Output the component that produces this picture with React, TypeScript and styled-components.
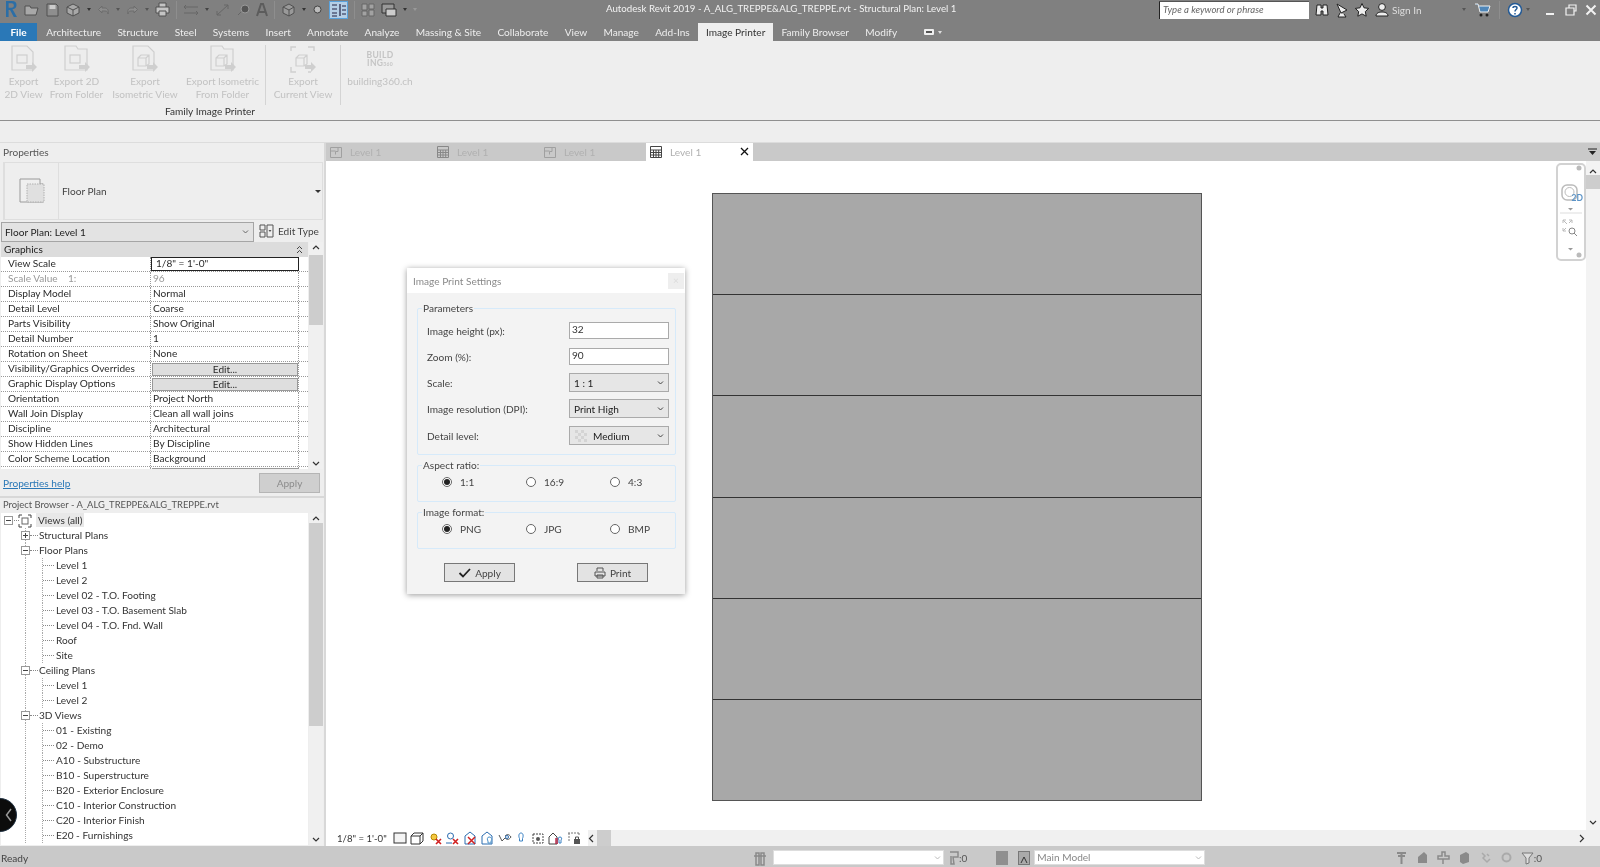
import React from 'react'
import styled, { createGlobalStyle } from 'styled-components'

const Global = createGlobalStyle`
  html, body { margin: 0; padding: 0; background: #eee; }
  * { box-sizing: border-box; }
  body { font-family: Lato, "Open Sans", sans-serif; font-size: 10.1px; color: #2a2a2a; }
`

const Page = styled.div`
  position: relative;
  width: 1600px;
  height: 867px;
  overflow: hidden;
  display: flex;
  flex-direction: column;
  background: #eee;
  filter: blur(0.3px);
`

/* ---------- title bar ---------- */
const TitleBar = styled.div`
  height: 22px;
  padding-bottom: 3px;
  background: #808080;
  display: flex;
  align-items: center;
  color: #eee;
`
const Qat = styled.div`
  width: 606px;
  display: flex;
  align-items: center;
  padding-left: 4px;
  gap: 6px;
  svg { display: block; flex: none; }
`
const QatSep = styled.span`
  width: 1px;
  height: 18px;
  background: #8e8e8e;
  flex: none;
`
const Caret = styled.span`
  width: 0;
  height: 0;
  border-left: 2.5px solid transparent;
  border-right: 2.5px solid transparent;
  border-top: 3px solid ${p => p.color || '#333'};
  flex: none;
`
const WindowTitle = styled.div`
  width: 553px;
  margin-top: -4px;
  font-size: 9.7px;
  white-space: nowrap;
  color: #f2f2f2;
`
const SearchBox = styled.div`
  width: 150px;
  height: 18px;
  background: #fff;
  border-left: 1px solid #222;
  border-top: 1px solid #555;
  color: #666;
  font-style: italic;
  font-size: 9.6px;
  line-height: 16px;
  padding-left: 3px;
`
const TitleTools = styled.div`
  flex: 1;
  display: flex;
  align-items: center;
  padding-left: 5px;
  svg { display: block; flex: none; }
`
const ToolGap = styled.span<{ $w: number }>`
  width: ${p => p.$w}px;
  flex: none;
`
const SignIn = styled.span`
  width: 72px;
  padding-left: 2px;
  color: #ddd;
`
const WinBtns = styled.div`
  margin-left: auto;
  padding-right: 3px;
  display: flex;
  gap: 7px;
  align-items: center;
`

/* ---------- ribbon tabs ---------- */
const TabBar = styled.div`
  height: 19px;
  background: #808080;
  display: flex;
  align-items: flex-end;
`
const FileTab = styled.div`
  width: 37px;
  height: 18px;
  background: #2a78b7;
  color: #fff;
  font-weight: 700;
  text-align: center;
  line-height: 18px;
  margin-right: 1px;
`
const RibbonTab = styled.div<{ $active?: boolean }>`
  height: 18px;
  line-height: 19px;
  padding: 0 8.15px;
  white-space: nowrap;
  color: ${p => (p.$active ? '#333' : '#ededed')};
  background: ${p => (p.$active ? '#eeeeee' : 'transparent')};
`
const TabExtra = styled.div`
  margin-left: 18px;
  display: flex;
  align-items: center;
  gap: 3px;
  height: 18px;
`

/* ---------- ribbon ---------- */
const Ribbon = styled.div`
  height: 80px;
  background: #eee;
  border-bottom: 1px solid #8f8f8f;
  flex: none;
  position: relative;
`
const RibbonRow = styled.div`
  height: 59px;
  padding-top: 4px;
  display: flex;
  align-items: flex-start;
`
const RibbonBtn = styled.div<{ $w: number }>`
  width: ${p => p.$w}px;
  display: flex;
  flex-direction: column;
  align-items: center;
  text-align: center;
  color: #c2c2c2;
  line-height: 12.5px;
  white-space: pre;
  flex: none;
  svg { display: block; }
`
const RibbonSep = styled.span<{ $gap?: number }>`
  width: 1px;
  height: 60px;
  margin-left: ${p => p.$gap ?? 0}px;
  background: #d4d4d4;
  flex: none;
`
const PanelLabel = styled.div`
  width: 420px;
  text-align: center;
  color: #333;
  padding-top: 5px;
`
const RibbonGap = styled.div`
  height: 22px;
  background: #eee;
  border-bottom: 1px solid #dcdcdc;
  flex: none;
`

/* ---------- main area ---------- */
const Main = styled.div`
  flex: 1;
  min-height: 0;
  display: flex;
`
const LeftColumn = styled.div`
  width: 326px;
  flex: none;
  display: flex;
  flex-direction: column;
  border-right: 2px solid #d8d8d8;
`
const PanelTitle = styled.div<{ $h: number; $size?: number }>`
  height: ${p => p.$h}px;
  line-height: ${p => p.$h - 1}px;
  padding-left: 3px;
  color: #555;
  font-size: ${p => p.$size ?? 10.1}px;
  white-space: nowrap;
`
const TypeSelector = styled.div`
  margin: 0 1px 0 3px;
  height: 58px;
  border: 1px solid #dedede;
  display: flex;
  align-items: center;
`
const TypeThumb = styled.div`
  width: 55px;
  height: 56px;
  border-right: 1px solid #dedede;
  border-left: 1px solid #dedede;
  display: flex;
  align-items: center;
  justify-content: center;
  margin-right: 3px;
`
const TypeName = styled.div`
  flex: 1;
  color: #444;
`
const BlackCaret = styled.span`
  margin-right: 1px;
  border-left: 3.5px solid transparent;
  border-right: 3.5px solid transparent;
  border-top: 3.5px solid #333;
`
const InstanceRow = styled.div`
  height: 20px;
  margin-top: 2px;
  display: flex;
  align-items: center;
`
const InstanceSelect = styled.div`
  width: 253px;
  height: 20px;
  margin-left: 1px;
  background: #e3e3e3;
  border: 1px solid #a5a5a5;
  padding: 0 4px 1px 3px;
  display: flex;
  align-items: center;
  justify-content: space-between;
  color: #222;
`
const EditType = styled.div`
  display: flex;
  align-items: center;
  gap: 4px;
  margin-left: 5px;
  margin-top: -2px;
  color: #444;
`
const PropsBody = styled.div`
  height: 227px;
  display: flex;
`
const PropsTable = styled.div`
  width: 307px;
  margin-left: 1px;
  overflow: hidden;
  background: #fff;
`
const GroupHead = styled.div`
  height: 15px;
  background: #dcdcdc;
  line-height: 14px;
  padding: 0 5px 1px 3px;
  display: flex;
  align-items: center;
  justify-content: space-between;
  color: #222;
`
const PropRow = styled.div`
  display: grid;
  grid-template-columns: 150px 148px 9px;
  height: 15px;
  line-height: 13px;
  border-bottom: 1px dotted #999;
`
const PropName = styled.div<{ $dim?: boolean }>`
  padding-left: 7px;
  color: ${p => (p.$dim ? '#999' : '#2a2a2a')};
  white-space: pre;
  border-right: 1px dotted #999;
`
const PropValue = styled.div<{ $dim?: boolean; $focus?: boolean }>`
  padding-left: ${p => (p.$focus ? '4px' : '2px')};
  color: ${p => (p.$dim ? '#999' : '#2a2a2a')};
  border: ${p => (p.$focus ? '1px solid #222' : '0')};
  border-right: ${p => (p.$focus ? '1px solid #222' : '1px dotted #999')};
  line-height: ${p => (p.$focus ? '11px' : '13px')};
  white-space: nowrap;
`
const EditBtn = styled.div`
  margin: 1px 0 0 -1px;
  height: 13px;
  line-height: 11px;
  background: #dedede;
  border: 1px solid #999;
  text-align: center;
`
const ScrollTrack = styled.div`
  width: 14px;
  margin-left: 1px;
  background: #f0f0f0;
  display: flex;
  flex-direction: column;
  align-items: center;
  padding-top: 3px;
  svg { display: block; flex: none; }
`
const ScrollThumb = styled.div<{ $h: number; $top?: number }>`
  width: 14px;
  height: ${p => p.$h}px;
  margin-top: ${p => p.$top ?? 5}px;
  background: #cdcdcd;
  flex: none;
`
const ScrollEnd = styled.div`
  margin-top: auto;
  margin-bottom: 3px;
`
const HelpRow = styled.div`
  height: 27px;
  display: flex;
  align-items: center;
  justify-content: space-between;
  padding: 0 4px 0 3px;
`
const HelpLink = styled.a`
  color: #2a78b7;
  text-decoration: underline;
`
const ApplyDisabled = styled.div`
  width: 61px;
  height: 20px;
  background: #cfcfcf;
  border: 1px solid #b5b5b5;
  text-align: center;
  line-height: 18px;
  color: #8c8c8c;
`
const PanelDivider = styled.div`
  height: 2px;
  background: #d8d8d8;
`
const BrowserBody = styled.div`
  flex: 1;
  min-height: 0;
  display: flex;
  padding-bottom: 1px;
`
const TreeList = styled.div`
  width: 307px;
  margin-left: 1px;
  overflow: hidden;
  background: #fff;
`
const TreeRow = styled.div<{ $level: number }>`
  position: relative;
  height: 15px;
  line-height: 15px;
  white-space: nowrap;
  padding-left: ${p => [35, 38, 55][p.$level]}px;
  color: #333;
  background: ${p =>
    p.$level === 2 ? 'linear-gradient(#aaa 50%, transparent 50%) 24px 0 / 1px 2px repeat-y' : 'none'};
  &::before {
    content: '';
    position: absolute;
    top: 7px;
    left: ${p => [11, 29, 42][p.$level]}px;
    width: ${p => [7, 8, 11][p.$level]}px;
    border-top: 1px dotted #888;
  }
  &::after {
    content: '';
    position: absolute;
    top: 0;
    left: ${p => [24, 24, 41][p.$level]}px;
    height: 15px;
    border-left: ${p => (p.$level === 0 ? '0' : '1px dotted #aaa')};
  }
`
const ExpandBox = styled.span<{ $left: number }>`
  position: absolute;
  z-index: 1;
  top: 3px;
  left: ${p => p.$left}px;
  width: 9px;
  height: 9px;
  background: #fff;
  border: 1px solid #999;
  &::before {
    content: '';
    position: absolute;
    top: 3px;
    left: 1px;
    width: 5px;
    border-top: 1px solid #444;
  }
`
const PlusBar = styled.span`
  position: absolute;
  top: 1px;
  left: 3px;
  height: 5px;
  border-left: 1px solid #444;
`
const ViewsLabel = styled.span`
  background: #e8e8e8;
  padding: 1px 2px;
`
const ViewsIcon = styled.span`
  position: absolute;
  z-index: 1;
  top: 1px;
  left: 17px;
  svg { display: block; }
`

/* ---------- view ---------- */
const ViewColumn = styled.div`
  flex: 1;
  min-width: 0;
  display: flex;
  flex-direction: column;
`
const ViewTabs = styled.div`
  height: 18px;
  background: #c9c9c9;
  display: flex;
  align-items: flex-end;
  position: relative;
`
const ViewTab = styled.div<{ $active?: boolean }>`
  width: 107px;
  height: 18px;
  padding-left: 3px;
  margin-left: ${p => (p.$active ? '-1px' : '0')};
  display: flex;
  align-items: center;
  gap: 7px;
  color: #b0b0b0;
  background: ${p => (p.$active ? '#fff' : 'transparent')};
  position: relative;
  svg { flex: none; display: block; }
`
const TabClose = styled.span`
  position: absolute;
  right: 3px;
  top: 3px;
  line-height: 11px;
  svg { display: block; }
`
const TabsMenu = styled.span`
  margin-left: auto;
  margin-right: 3px;
  align-self: center;
  svg { display: block; }
`
const ViewBody = styled.div`
  flex: 1;
  min-height: 0;
  display: flex;
  background: #fff;
  position: relative;
`
const Canvas = styled.div`
  flex: 1;
  padding: 32px 0 0 386px;
`
const Sheet = styled.div`
  width: 490px;
  height: 608px;
  border: 1px solid #555;
  background: #a8a8a8;
  display: flex;
  flex-direction: column;
`
const Slab = styled.div`
  flex: 1;
  border-bottom: 1px solid #333;
  &:last-child { border-bottom: 0; }
`
const RightScroll = styled.div`
  width: 14px;
  background: #f3f3f3;
  display: flex;
  flex-direction: column;
  align-items: center;
  padding-top: 8px;
`
const NavBar = styled.div`
  position: absolute;
  top: 2px;
  right: 14px;
  width: 30px;
  height: 98px;
  background: #fff;
  border: 2px solid #d2d2d2;
  border-radius: 5px;
`
const NavIcons = styled.div`
  display: flex;
  justify-content: center;
  svg { display: block; }
`
const NavBadge = styled.span`
  position: absolute;
  top: 29px;
  right: 1px;
  font-size: 8.5px;
  font-weight: 700;
  color: #5b93c7;
  line-height: 9px;
`
const ViewBar = styled.div`
  height: 16px;
  display: flex;
  align-items: center;
  background: #f0f0f0;
  border-left: 2px solid #fff;
  position: relative;
  svg { display: block; flex: none; }
`
const ViewControls = styled.div`
  width: 260px;
  height: 16px;
  background: #fff;
  display: flex;
  align-items: center;
  padding-left: 9px;
  gap: 3.5px;
  font-size: 9.6px;
`
const ViewScaleLabel = styled.span`
  width: 52px;
  white-space: nowrap;
  color: #333;
`
const HScrollThumb = styled.div`
  width: 14px;
  height: 16px;
  flex: none;
  background: #cdcdcd;
  margin-left: 3px;
`
const HScrollEnd = styled.span`
  margin-left: auto;
  margin-right: 15px;
`

/* ---------- status bar ---------- */
const StatusBar = styled.div`
  height: 21px;
  background: #c9c9c9;
  display: flex;
  align-items: center;
  padding-top: 2px;
  flex: none;
  svg { display: block; flex: none; }
`
const StatusText = styled.div`
  width: 753px;
  padding-left: 1px;
  color: #444;
`
const StatusField = styled.div<{ $w: number }>`
  width: ${p => p.$w}px;
  height: 15px;
  background: #fff;
  border: 1px solid #ddd;
  color: #888;
  line-height: 13px;
  padding: 0 2px;
  display: flex;
  align-items: center;
  justify-content: space-between;
  flex: none;
`
const StatusCount = styled.span`
  color: #555;
  font-size: 10px;
`
const StatusRight = styled.div`
  margin-left: auto;
  margin-right: 58px;
  display: flex;
  align-items: center;
  gap: 8px;
`
const StatusFilter = styled.span`
  display: flex;
  align-items: center;
`

/* ---------- dialog ---------- */
const Dialog = styled.div`
  position: absolute;
  left: 407px;
  top: 268px;
  width: 278px;
  height: 326px;
  background: #f3f3f3;
  box-shadow: 0 1px 6px rgba(0, 0, 0, 0.4);
  display: flex;
  flex-direction: column;
`
const DialogTitle = styled.div`
  height: 25px;
  background: #fff;
  display: flex;
  align-items: center;
  justify-content: space-between;
  padding: 0 1px 0 6px;
  color: #8a8a8a;
`
const DialogClose = styled.span`
  width: 16px;
  height: 16px;
  background: #eee;
  color: #dcdcdc;
  text-align: center;
  line-height: 15px;
  font-size: 10px;
`
const DialogBody = styled.div`
  padding: 15px 9px 0 10px;
  display: flex;
  flex-direction: column;
`
const Group = styled.div<{ $h: number }>`
  position: relative;
  height: ${p => p.$h}px;
  border: 1px solid #d6eafa;
  border-radius: 2px;
  margin-bottom: 10px;
`
const GroupLegend = styled.span`
  position: absolute;
  top: -7px;
  left: 4px;
  padding: 0 1px;
  line-height: 12px;
  background: #f3f3f3;
  color: #444;
`
const FieldList = styled.div`
  padding: 13px 6px 0 9px;
  display: flex;
  flex-direction: column;
`
const Field = styled.div<{ $h: number; $gap: number }>`
  height: ${p => p.$h}px;
  margin-bottom: ${p => p.$gap}px;
  display: flex;
  align-items: center;
  justify-content: space-between;
  color: #444;
`
const TextBox = styled.div`
  width: 100px;
  height: 100%;
  background: #fff;
  border: 1px solid #aaa;
  padding-left: 2px;
  line-height: 13px;
  color: #333;
`
const SelectBox = styled.div`
  width: 100px;
  height: 100%;
  background: #e6e6e6;
  border: 1px solid #aaa;
  padding: 0 4px;
  display: flex;
  align-items: center;
  gap: 5px;
  color: #222;
  svg { flex: none; display: block; }
`
const SelectCaret = styled.span`
  margin-left: auto;
`
const RadioRow = styled.div`
  padding: 10px 0 0 24px;
  display: flex;
`
const RadioItem = styled.label<{ $w: number }>`
  width: ${p => p.$w}px;
  display: flex;
  align-items: center;
  gap: 8px;
  color: #444;
`
const RadioDot = styled.span<{ $on?: boolean }>`
  width: 10px;
  height: 10px;
  border-radius: 50%;
  border: 1px solid #666;
  background: #fff;
  display: flex;
  align-items: center;
  justify-content: center;
  &::after {
    content: '';
    display: ${p => (p.$on ? 'block' : 'none')};
    width: 6px;
    height: 6px;
    border-radius: 50%;
    background: #222;
  }
`
const DialogActions = styled.div`
  padding: 4px 28px 0 27px;
  display: flex;
  justify-content: space-between;
`
const DialogBtn = styled.div`
  width: 71px;
  height: 19px;
  background: #e3e3e3;
  border: 1px solid #777;
  display: flex;
  align-items: center;
  justify-content: center;
  gap: 4px;
  color: #444;
  svg { display: block; }
`

/* ---------- floating back badge ---------- */
const BackBadge = styled.div`
  position: absolute;
  left: -17px;
  top: 798px;
  width: 34px;
  height: 34px;
  border-radius: 50%;
  background: #0c0c0c;
  border: 1px solid #234;
  display: flex;
  align-items: center;
  justify-content: flex-end;
  padding-right: 3px;
  svg { display: block; }
`
const LogoText = styled.div`
  font-size: 8.5px;
  line-height: 8px;
  font-weight: 700;
  color: #c4c4c4;
  text-align: center;
  letter-spacing: 0.3px;
  small { font-size: 5px; }
`

/* ---------- drawings ---------- */
const Ico: React.FC<{ w: number; h: number; children: React.ReactNode }> = ({ w, h, children }) => (
  <svg width={w} height={h} viewBox={`0 0 ${w} ${h}`} fill="none">
    {children}
  </svg>
)

const Chev = ({ up = false }: { up?: boolean }) => (
  <Ico w={8} h={5}>
    <path d={up ? 'M1 4l3-3 3 3' : 'M1 1l3 3 3-3'} stroke="#333" strokeWidth="1.2" />
  </Ico>
)
const SmallChev = ({ c = '#666' }: { c?: string }) => (
  <Ico w={7} h={4}>
    <path d="M1 .5l2.5 2.5L6 .5" stroke={c} strokeWidth="1" />
  </Ico>
)

const RevitLogo = () => (
  <svg width="14" height="19" viewBox="0 0 14 19" fill="none">
    <path d="M2 1h6c3 0 4.5 1.5 4.5 4S11 9 8.5 9.3L13 17h-3.2L6 10H4.6v7H2z" fill="#2c6ea6" />
    <path d="M4.6 3.2v4.5H7.5c1.6 0 2.3-1 2.3-2.3S9 3.2 7.5 3.2z" fill="#808080" />
  </svg>
)

const fileStroke = '#cfcfcf'
const ArrowMark = ({ x, y }: { x: number; y: number }) => (
  <path d={`M${x} ${y + 3}h6v-3l5 5-5 5v-3h-6z`} fill="#cfcfcf" />
)
const PageShape = () => <path d="M3 1h15l6 6v18H3z" fill="#ededed" stroke={fileStroke} strokeWidth="1.2" />
const FolderShape = () => <path d="M3 5V1h11l2 3h9v21H3z" fill="#ededed" stroke={fileStroke} strokeWidth="1.2" />
const SquareMark = () => <rect x="8" y="10" width="10" height="8" stroke={fileStroke} strokeWidth="1.2" />
const CubeMark = () => <path d="M8 13l3-3h8v9l-3 2H8zM8 13h8v8M16 13l3-3" stroke={fileStroke} strokeWidth="1.2" />

type RibbonKind = 'page2d' | 'folder2d' | 'pageIso' | 'folderIso' | 'current'

const RibbonIcon = ({ kind }: { kind: RibbonKind }) => (
  <Ico w={30} h={30}>
    {kind.startsWith('page') && <PageShape />}
    {kind.startsWith('folder') && <FolderShape />}
    {kind === 'current' && <path d="M3 6V2h5M20 2h6v4M3 22v5h5M20 27h3" stroke={fileStroke} strokeWidth="1.4" />}
    {kind.endsWith('2d') ? <SquareMark /> : <CubeMark />}
    <ArrowMark x={17} y={17} />
  </Ico>
)

const PlanIcon = ({ c = '#a0a0a0' }: { c?: string }) => (
  <Ico w={14} h={14}>
    <path d="M1.5 2.5h11v10h-11zM1.5 6h5M9 2.5v4H6.5v3" stroke={c} strokeWidth="1" />
  </Ico>
)
const ScheduleIcon = ({ c = '#888' }: { c?: string }) => (
  <Ico w={14} h={14}>
    <path d="M1.5 1.5h11v11h-11zM1.5 5h11M1.5 7.5h11M1.5 10h11M4.5 5v7.5M7 5v7.5M9.7 5v7.5" stroke={c} strokeWidth="1" />
  </Ico>
)

const TYPE_ICON = (
  <svg width="30" height="30" viewBox="0 0 30 30" fill="none">
    <path d="M3 3h20v5h3v18H3z" fill="#efefef" stroke="#9a9a9a" strokeWidth="1" />
    <rect x="10" y="8" width="17" height="18" fill="#e0e0e0" stroke="#b0b0b0" strokeDasharray="1.5 1" />
  </svg>
)

const qatStroke = '#505050'
const QatIcons = () => (
  <Qat>
    <RevitLogo />
    <Ico w={16} h={16}><path d="M1 13V4h5l1 2h7l-2 7z" fill="#a8a8a8" stroke={qatStroke} /></Ico>
    <Ico w={13} h={14}><path d="M1 1h9l2 2v10H1z" fill="#8e8e8e" stroke={qatStroke} /><rect x="3.5" y="2" width="6" height="4" fill="#ccc" /></Ico>
    <Ico w={16} h={16}><path d="M2 5l6-3 6 3v6l-6 3-6-3z" fill="#a8a8a8" stroke={qatStroke} /><path d="M2 5l6 3 6-3M8 8v6" stroke={qatStroke} /></Ico>
    <Caret />
    <Ico w={13} h={12}><path d="M5 2L1.5 5.5 5 9V7h3c2 0 3 1 3 3 1-4-1-6-3-6H5z" fill="#8c8c8c" stroke="#6c6c6c" /></Ico>
    <Caret color="#555" />
    <Ico w={13} h={12}><path d="M8 2l3.5 3.5L8 9V7H5c-2 0-3 1-3 3-1-4 1-6 3-6h3z" fill="#8c8c8c" stroke="#6c6c6c" /></Ico>
    <Caret color="#555" />
    <Ico w={15} h={15}><path d="M4 5V1h7v4M4 11H1V5h13v6h-3M4 9h7v5H4z" fill="#c4c4c4" stroke={qatStroke} /></Ico>
    <QatSep />
    <Ico w={16} h={12}><path d="M1 3h14M1 9h14M3 1L1 3l2 2M13 7l2 2-2 2" stroke="#666" /></Ico>
    <Caret color="#444" />
    <Ico w={15} h={14}><path d="M2 12L13 2M2 8v4h4M9 2h4v4" stroke="#666" /></Ico>
    <Ico w={14} h={14}><path d="M2 12l4-4" stroke="#666" /><circle cx="9" cy="6" r="4" fill="#555" stroke="#999" /></Ico>
    <Ico w={12} h={14}><path d="M1 13L5 1h2l4 12M3 9h6" stroke="#5c5c5c" strokeWidth="2" /></Ico>
    <QatSep />
    <Ico w={15} h={15}><path d="M2 5l6-3 5 3v6l-5 3-6-3z" fill="#999" stroke={qatStroke} /><path d="M2 5l6 3 5-3M8 8v6" stroke={qatStroke} /></Ico>
    <Caret />
    <Ico w={11} h={11}><circle cx="5.5" cy="5.5" r="3.5" fill="#bbb" stroke="#444" /></Ico>
    <Ico w={19} h={18}><rect width="19" height="18" fill="#b5cfe6" /><rect x=".5" y=".5" width="18" height="17" stroke="#5aa2dc" /><path d="M3 4h5M3 8h5M3 12h5M3 15h5M11 3v12M13 5h4M13 9h4M13 13h4" stroke="#224" strokeWidth="1.2" /></Ico>
    <QatSep />
    <Ico w={14} h={14}><path d="M1 1h5v6H1zM8 1h5v5H8zM1 8h5v5H1zM8 7h5v6H8z" fill="#a2a2a2" stroke="#666" /></Ico>
    <Ico w={16} h={14}><path d="M1 1h12v9H1z" fill="#999" stroke="#333" /><path d="M5 6h10v7H5z" fill="#ccc" stroke="#333" /></Ico>
    <Caret />
    <Caret color="#999" />
  </Qat>
)

const statusGray = '#8a8a8a'

const RIBBON_TABS = ['Architecture', 'Structure', 'Steel', 'Systems', 'Insert', 'Annotate', 'Analyze', 'Massing & Site', 'Collaborate', 'View', 'Manage', 'Add-Ins', 'Image Printer', 'Family Browser', 'Modify']

const RIBBON_BTNS: { w: number; kind: RibbonKind; label: string }[] = [
  { w: 47, kind: 'page2d', label: 'Export\n2D View' },
  { w: 59, kind: 'folder2d', label: 'Export 2D\nFrom Folder' },
  { w: 78, kind: 'pageIso', label: 'Export\nIsometric View' },
  { w: 77, kind: 'folderIso', label: 'Export Isometric\nFrom Folder' },
]

const PROPS: { name: string; value?: string; dim?: boolean; focus?: boolean; edit?: boolean }[] = [
  { name: 'View Scale', value: '1/8" = 1\'-0"', focus: true },
  { name: 'Scale Value    1:', value: '96', dim: true },
  { name: 'Display Model', value: 'Normal' },
  { name: 'Detail Level', value: 'Coarse' },
  { name: 'Parts Visibility', value: 'Show Original' },
  { name: 'Detail Number', value: '1' },
  { name: 'Rotation on Sheet', value: 'None' },
  { name: 'Visibility/Graphics Overrides', edit: true },
  { name: 'Graphic Display Options', edit: true },
  { name: 'Orientation', value: 'Project North' },
  { name: 'Wall Join Display', value: 'Clean all wall joins' },
  { name: 'Discipline', value: 'Architectural' },
  { name: 'Show Hidden Lines', value: 'By Discipline' },
  { name: 'Color Scheme Location', value: 'Background' },
  { name: 'Color Scheme', edit: true },
]

const TREE: { level: number; label: string; box?: 'plus' | 'minus' }[] = [
  { level: 1, label: 'Structural Plans', box: 'plus' },
  { level: 1, label: 'Floor Plans', box: 'minus' },
  { level: 2, label: 'Level 1' },
  { level: 2, label: 'Level 2' },
  { level: 2, label: 'Level 02 - T.O. Footing' },
  { level: 2, label: 'Level 03 - T.O. Basement Slab' },
  { level: 2, label: 'Level 04 - T.O. Fnd. Wall' },
  { level: 2, label: 'Roof' },
  { level: 2, label: 'Site' },
  { level: 1, label: 'Ceiling Plans', box: 'minus' },
  { level: 2, label: 'Level 1' },
  { level: 2, label: 'Level 2' },
  { level: 1, label: '3D Views', box: 'minus' },
  { level: 2, label: '01 - Existing' },
  { level: 2, label: '02 - Demo' },
  { level: 2, label: 'A10 - Substructure' },
  { level: 2, label: 'B10 - Superstructure' },
  { level: 2, label: 'B20 - Exterior Enclosure' },
  { level: 2, label: 'C10 - Interior Construction' },
  { level: 2, label: 'C20 - Interior Finish' },
  { level: 2, label: 'E20 - Furnishings' },
]

const ViewControlIcons = () => (
  <>
    <Ico w={14} h={12}><rect x="1" y="1" width="12" height="10" fill="#f4f4f4" stroke="#333" /></Ico>
    <Ico w={14} h={13}><path d="M1 4h9v8H1zM1 4l3-3h9v8l-3 3M10 4l3-3" stroke="#333" /></Ico>
    <Ico w={14} h={14}><circle cx="6" cy="6" r="3" fill="#f5c842" stroke="#b58900" /><path d="M8 8l5 5M13 8l-5 5" stroke="#d02020" strokeWidth="1.6" /></Ico>
    <Ico w={14} h={14}><circle cx="5.5" cy="5" r="3" stroke="#2b6cb0" /><path d="M1 12h6" stroke="#2b6cb0" /><path d="M8 8l5 5M13 8l-5 5" stroke="#d02020" strokeWidth="1.6" /></Ico>
    <Ico w={14} h={14}><path d="M2 5l5-4 5 4v8H2z" stroke="#2b6cb0" /><path d="M5 6l7 7M12 6l-7 7" stroke="#d02020" strokeWidth="1.5" /></Ico>
    <Ico w={14} h={14}><path d="M2 5l5-4 5 4v8H2z" stroke="#2b6cb0" /><path d="M9 6c3 0 3 3 2 4v2H8v-2C7 9 7 6 9 6z" fill="#fff" stroke="#4a90c8" /></Ico>
    <Ico w={14} h={14}><path d="M1 4l3 6 3-3c2 2 4 2 6-1-2-3-4-3-6-1" stroke="#555" /><circle cx="9" cy="6" r="1.500" stroke="#2b6cb0" /></Ico>
    <Ico w={12} h={14}><path d="M6 2c2.500 0 2.500 3.500 1.500 5.500V10h-3V7.500C3.500 5.500 3.500 2 6 2z" stroke="#3b82c4" /></Ico>
    <Ico w={14} h={14}><path d="M2 3h10v9H2z" stroke="#444" strokeDasharray="2 1" /><circle cx="7" cy="8" r="2" fill="#555" /></Ico>
    <Ico w={15} h={14}><path d="M1 6l4-4 4 4v7H1z" stroke="#444" /><path d="M7 7h3v6H7z" fill="#b24" opacity=".7" /><path d="M12 6c2 0 2 2 1 3v3h-2V9c-1-1-1-3 1-3z" stroke="#3b82c4" /></Ico>
    <Ico w={14} h={14}><path d="M1 2h12M2 2v9M12 2v2" stroke="#777" strokeDasharray="2 1" /><rect x="7" y="8" width="6" height="5" fill="#555" /><path d="M8.500 8V6h3v2" stroke="#555" /></Ico>
  </>
)

const DotCheck = () => (
  <svg width="14" height="14" viewBox="0 0 14 14">
    {[0, 1, 2, 3].flatMap(r =>
      [0, 1, 2, 3].map(c =>
        (r + c) % 2 === 0 ? <rect key={`${r}${c}`} x={c * 3 + 1} y={r * 3 + 1} width="3" height="3" fill="#d4d4d4" /> : null,
      ),
    )}
  </svg>
)

export default function App() {
  return (
    <Page>
      <Global />
      <TitleBar>
        <QatIcons />
        <WindowTitle>Autodesk Revit 2019 -  A_ALG_TREPPE&amp;ALG_TREPPE.rvt - Structural Plan: Level 1</WindowTitle>
        <SearchBox>Type a keyword or phrase</SearchBox>
        <TitleTools>
          <Ico w={16} h={16}><path d="M3 3h4v3h2V3h4l1 10H9V9H7v4H2z" fill="#eee" stroke="#222" /></Ico>
          <ToolGap $w={4} />
          <Ico w={16} h={16}><path d="M3 2l10 6-6 3zM6 11l-2 4h8l-2-3" fill="#eee" stroke="#222" /></Ico>
          <ToolGap $w={4} />
          <Ico w={16} h={16}><path d="M8 1.500l2 4.300 4.700.6-3.400 3.200.9 4.600L8 11.900l-4.200 2.300.9-4.600L1.300 6.400 6 5.800z" fill="#eee" stroke="#222" /></Ico>
          <ToolGap $w={4} />
          <Ico w={16} h={16}><circle cx="8" cy="5" r="3.400" fill="#eee" stroke="#222" /><path d="M2 14c0-3 3-4 6-4s6 1 6 4z" fill="#eee" stroke="#222" /></Ico>
          <SignIn>Sign In</SignIn>
          <Caret color="#555" />
          <ToolGap $w={8} />
          <Ico w={17} h={16}><path d="M1 2h3l2 8h8l2-6H5" fill="#4f86b8" stroke="#eee" /><circle cx="7" cy="13" r="1.500" fill="#222" /><circle cx="13" cy="13" r="1.500" fill="#222" /></Ico>
          <ToolGap $w={8} />
          <QatSep />
          <ToolGap $w={7} />
          <Ico w={16} h={16}><circle cx="8" cy="8" r="6.500" fill="#fff" stroke="#235a96" strokeWidth="1.500" /><path d="M6 6c0-2 4-2 4 0 0 1.500-2 1.500-2 3.500M8 11v1.500" stroke="#235a96" strokeWidth="1.500" /></Ico>
          <ToolGap $w={3} />
          <Caret color="#555" />
          <WinBtns>
            <Ico w={14} h={12}><path d="M3 10h8" stroke="#f2f2f2" strokeWidth="2" /></Ico>
            <Ico w={14} h={12}><path d="M2 4h8v7H2zM5 4V1h7v6h-2" stroke="#f2f2f2" strokeWidth="1.200" /></Ico>
            <Ico w={12} h={12}><path d="M1.500 1.500l9 9M10.500 1.500l-9 9" stroke="#f2f2f2" strokeWidth="2" /></Ico>
          </WinBtns>
        </TitleTools>
      </TitleBar>

      <TabBar>
        <FileTab>File</FileTab>
        {RIBBON_TABS.map(t => (
          <RibbonTab key={t} $active={t === 'Image Printer'}>
            {t}
          </RibbonTab>
        ))}
        <TabExtra>
          <Ico w={12} h={8}><rect x="1" y="1" width="10" height="6" rx="1" fill="#eee" /><rect x="3" y="3" width="6" height="2" fill="#555" /></Ico>
          <Caret color="#ddd" />
        </TabExtra>
      </TabBar>

      <Ribbon>
        <RibbonRow>
          {RIBBON_BTNS.map(b => (
            <RibbonBtn key={b.kind} $w={b.w}>
              <RibbonIcon kind={b.kind} />
              {b.label}
            </RibbonBtn>
          ))}
          <RibbonSep $gap={4} />
          <RibbonBtn $w={74}>
            <RibbonIcon kind="current" />
            {'Export\nCurrent View'}
          </RibbonBtn>
          <RibbonSep />
          <RibbonBtn $w={78}>
            <svg width="40" height="30" viewBox="0 0 40 30">
              <foreignObject x="0" y="6" width="40" height="22">
                <LogoText>BUILD<br />ING<small>360</small></LogoText>
              </foreignObject>
            </svg>
            building360.ch
          </RibbonBtn>
        </RibbonRow>
        <PanelLabel>Family Image Printer</PanelLabel>
      </Ribbon>
      <RibbonGap />

      <Main>
        <LeftColumn>
          <PanelTitle $h={19}>Properties</PanelTitle>
          <TypeSelector>
            <TypeThumb>{TYPE_ICON}</TypeThumb>
            <TypeName>Floor Plan</TypeName>
            <BlackCaret />
          </TypeSelector>
          <InstanceRow>
            <InstanceSelect>
              Floor Plan: Level 1
              <SmallChev />
            </InstanceSelect>
            <EditType>
              <Ico w={15} h={14}><path d="M1 1h5v5H1zM1 8h5v5H1zM8 1h6v12H8z" stroke="#555" /><path d="M9.500 6h3l-1.500 2z" fill="#555" /></Ico>
              Edit Type
            </EditType>
          </InstanceRow>
          <PropsBody>
            <PropsTable>
              <GroupHead>
                Graphics
                <Ico w={7} h={9}><path d="M1 4l2.500-2.500L6 4M1 8l2.500-2.500L6 8" stroke="#444" /></Ico>
              </GroupHead>
              {PROPS.map(p => (
                <PropRow key={p.name}>
                  <PropName $dim={p.dim}>{p.name}</PropName>
                  {p.edit ? (
                    <PropValue>
                      <EditBtn>Edit...</EditBtn>
                    </PropValue>
                  ) : (
                    <PropValue $dim={p.dim} $focus={p.focus}>
                      {p.value}
                    </PropValue>
                  )}
                </PropRow>
              ))}
            </PropsTable>
            <ScrollTrack>
              <Chev up />
              <ScrollThumb $h={70} />
              <ScrollEnd>
                <Chev />
              </ScrollEnd>
            </ScrollTrack>
          </PropsBody>
          <HelpRow>
            <HelpLink>Properties help</HelpLink>
            <ApplyDisabled>Apply</ApplyDisabled>
          </HelpRow>
          <PanelDivider />
          <PanelTitle $h={15} $size={9.4}>Project Browser - A_ALG_TREPPE&amp;ALG_TREPPE.rvt</PanelTitle>
          <BrowserBody>
            <TreeList>
              <TreeRow $level={0}>
                <ExpandBox $left={3} />
                <ViewsIcon>
                  <Ico w={14} h={14}><path d="M1 4V1h3M10 1h3v3M1 10v3h3M10 13h3v-3" stroke="#444" /><rect x="4" y="4" width="6" height="6" stroke="#666" /></Ico>
                </ViewsIcon>
                <ViewsLabel>Views (all)</ViewsLabel>
              </TreeRow>
              {TREE.map((r, i) => (
                <TreeRow key={`${r.label}${i}`} $level={r.level}>
                  {r.box && <ExpandBox $left={20}>{r.box === 'plus' && <PlusBar />}</ExpandBox>}
                  {r.label}
                </TreeRow>
              ))}
            </TreeList>
            <ScrollTrack>
              <Chev up />
              <ScrollThumb $h={203} $top={2} />
              <ScrollEnd>
                <Chev />
              </ScrollEnd>
            </ScrollTrack>
          </BrowserBody>
        </LeftColumn>

        <ViewColumn>
          <ViewTabs>
            <ViewTab><PlanIcon />Level 1</ViewTab>
            <ViewTab><ScheduleIcon />Level 1</ViewTab>
            <ViewTab><PlanIcon />Level 1</ViewTab>
            <ViewTab $active>
              <ScheduleIcon c="#444" />
              Level 1
              <TabClose>
                <Ico w={11} h={11}><path d="M2 2l7 7M9 2l-7 7" stroke="#111" strokeWidth="1.300" /></Ico>
              </TabClose>
            </ViewTab>
            <TabsMenu>
              <Ico w={9} h={8}><path d="M0 1h9" stroke="#222" /><path d="M1 3h7L4.500 7z" fill="#222" /></Ico>
            </TabsMenu>
          </ViewTabs>
          <ViewBody>
            <Canvas>
              <Sheet>
                {[0, 1, 2, 3, 4, 5].map(i => (
                  <Slab key={i} />
                ))}
              </Sheet>
            </Canvas>
            <NavBar>
              <NavIcons>
                <svg width="26" height="94" viewBox="0 0 26 94" fill="none">
                  <circle cx="21" cy="3" r="2.500" fill="#bbb" />
                  <rect x="4" y="20" width="15" height="15" rx="5" stroke="#bbb" strokeWidth="1.500" />
                  <circle cx="11.500" cy="27" r="4.500" stroke="#bbb" />
                  <path d="M10 43h5l-2.500 2.500z" fill="#999" />
                  <path d="M2 48h22" stroke="#ddd" />
                  <path d="M5 55l4 4M5 55v3M5 55h3M14 55l-3 3M14 55h-3M14 55v3M5 66l3-3M5 66v-3M5 66h3" stroke="#bbb" />
                  <circle cx="14" cy="66" r="3" stroke="#888" />
                  <path d="M16 68l3 3" stroke="#888" />
                  <path d="M10 83h5l-2.500 2.500z" fill="#999" />
                  <circle cx="21" cy="90" r="2.500" fill="#bbb" />
                </svg>
              </NavIcons>
              <NavBadge>2D</NavBadge>
            </NavBar>
            <RightScroll>
              <Chev up />
              <ScrollThumb $h={14} $top={1} />
              <ScrollEnd>
                <Chev />
              </ScrollEnd>
            </RightScroll>
          </ViewBody>
          <ViewBar>
            <ViewControls>
              <ViewScaleLabel>1/8" = 1'-0"</ViewScaleLabel>
              <ViewControlIcons />
            </ViewControls>
            <Ico w={6} h={9}><path d="M5 1L1.500 4.500 5 8" stroke="#333" strokeWidth="1.200" /></Ico>
            <HScrollThumb />
            <HScrollEnd>
              <Ico w={6} h={9}><path d="M1 1l3.500 3.500L1 8" stroke="#333" strokeWidth="1.200" /></Ico>
            </HScrollEnd>
          </ViewBar>
        </ViewColumn>
      </Main>

      <StatusBar>
        <StatusText>Ready</StatusText>
        <Ico w={14} h={16}><path d="M3 3h3v12H3zM8 3h3v12H8zM1 6h12" stroke={statusGray} strokeWidth="1.500" /></Ico>
        <ToolGap $w={6} />
        <StatusField $w={171}><span /><SmallChev c="#bbb" /></StatusField>
        <ToolGap $w={4} />
        <Ico w={11} h={16}><path d="M2 2h8v5H5l1 7H3V6" stroke={statusGray} strokeWidth="1.500" /></Ico>
        <StatusCount>:0</StatusCount>
        <ToolGap $w={29} />
        <Ico w={12} h={14}><rect width="12" height="14" fill="#8f8f8f" /></Ico>
        <ToolGap $w={10} />
        <Ico w={12} h={14}><rect x=".5" y=".5" width="11" height="13" fill="#aaa" stroke="#777" /><path d="M3 12l3-6 3 6" stroke="#333" /></Ico>
        <ToolGap $w={4} />
        <StatusField $w={171}>Main Model<SmallChev c="#bbb" /></StatusField>
        <StatusRight>
          <Ico w={13} h={15}><path d="M2 3h9M6.500 3v11M3 6h7" stroke={statusGray} strokeWidth="2" /></Ico>
          <Ico w={13} h={15}><path d="M2 13V7l6-5 3 3v8z" fill={statusGray} /></Ico>
          <Ico w={13} h={15}><path d="M5 2h3v4h4v3H1V6h4zM6 9v5" stroke={statusGray} strokeWidth="1.500" /></Ico>
          <Ico w={13} h={15}><path d="M2 5l6-3 3 2v8l-6 2-3-2z" fill={statusGray} /></Ico>
          <Ico w={13} h={15}><path d="M3 3l3 3-2 2 4 4 3-3M8 4l2 2" stroke="#aaa" strokeWidth="1.500" /></Ico>
          <Ico w={13} h={15}><circle cx="6.500" cy="7.500" r="4" stroke="#aaa" strokeWidth="2" /></Ico>
          <StatusFilter>
            <Ico w={13} h={15}><path d="M1 3h11L8 8v5l-3 1V8z" fill="#ddd" stroke="#777" /></Ico>
            <StatusCount>:0</StatusCount>
          </StatusFilter>
        </StatusRight>
      </StatusBar>

      <Dialog>
        <DialogTitle>
          Image Print Settings
          <DialogClose>×</DialogClose>
        </DialogTitle>
        <DialogBody>
          <Group $h={147}>
            <GroupLegend>Parameters</GroupLegend>
            <FieldList>
              <Field $h={17} $gap={9}>Image height (px):<TextBox>32</TextBox></Field>
              <Field $h={17} $gap={8}>Zoom (%):<TextBox>90</TextBox></Field>
              <Field $h={19} $gap={7}>Scale:<SelectBox>1 : 1<SelectCaret><SmallChev c="#444" /></SelectCaret></SelectBox></Field>
              <Field $h={19} $gap={8}>Image resolution (DPI):<SelectBox>Print High<SelectCaret><SmallChev c="#444" /></SelectCaret></SelectBox></Field>
              <Field $h={19} $gap={0}>Detail level:<SelectBox><DotCheck />Medium<SelectCaret><SmallChev c="#444" /></SelectCaret></SelectBox></Field>
            </FieldList>
          </Group>
          <Group $h={37}>
            <GroupLegend>Aspect ratio:</GroupLegend>
            <RadioRow>
              <RadioItem $w={84}><RadioDot $on />1:1</RadioItem>
              <RadioItem $w={84}><RadioDot />16:9</RadioItem>
              <RadioItem $w={60}><RadioDot />4:3</RadioItem>
            </RadioRow>
          </Group>
          <Group $h={37}>
            <GroupLegend>Image format:</GroupLegend>
            <RadioRow>
              <RadioItem $w={84}><RadioDot $on />PNG</RadioItem>
              <RadioItem $w={84}><RadioDot />JPG</RadioItem>
              <RadioItem $w={60}><RadioDot />BMP</RadioItem>
            </RadioRow>
          </Group>
          <DialogActions>
            <DialogBtn>
              <Ico w={13} h={11}><path d="M1.500 6l3.500 3.500L12 2" stroke="#222" strokeWidth="1.800" /></Ico>
              Apply
            </DialogBtn>
            <DialogBtn>
              <Ico w={12} h={12}><path d="M3 4V1h6v3M1 5h10v4H1zM3 8h6v3H3z" stroke="#555" /></Ico>
              Print
            </DialogBtn>
          </DialogActions>
        </DialogBody>
      </Dialog>

      <BackBadge>
        <Ico w={8} h={14}><path d="M6 1L1.500 7 6 13" stroke="#999" strokeWidth="1.500" /></Ico>
      </BackBadge>
    </Page>
  )
}
